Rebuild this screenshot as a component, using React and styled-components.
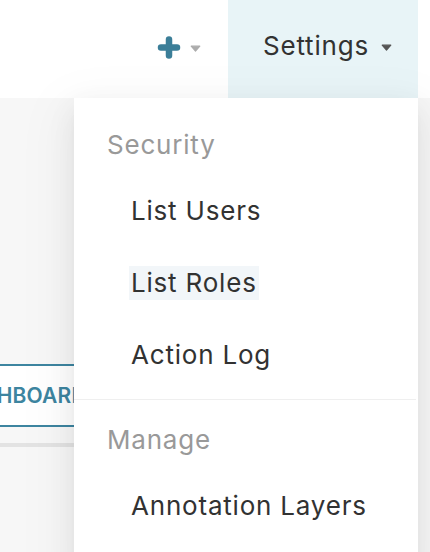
import React from "react";
import styled, { createGlobalStyle } from "styled-components";

const Global = createGlobalStyle`
  html, body { margin: 0; padding: 0; background: #f7f7f7; }
  body { font-family: Inter, "Noto Sans", "Liberation Sans", sans-serif; }
  * { box-sizing: border-box; }
`;

const Page = styled.div`
  position: relative;
  width: 430px;
  height: 552px;
  overflow: hidden;
  background: #f7f7f7;
  display: flex;
  flex-direction: column;
`;

const Header = styled.header`
  height: 98px;
  flex: none;
  background: #ffffff;
  display: flex;
  justify-content: flex-end;
  align-items: stretch;
  padding-right: 12px;
`;

const NewMenu = styled.div`
  display: flex;
  align-items: center;
  gap: 9px;
  padding: 0 27px 4px 0;
`;

const SettingsTab = styled.div`
  width: 190px;
  background: #e8f4f7;
  display: flex;
  align-items: center;
  gap: 12px;
  padding: 0 0 6px 35px;
  color: #323232;
  font-size: 26px;
  letter-spacing: 0.8px;
  line-height: 1;
  white-space: nowrap;
`;

const Body = styled.main`
  flex: 1;
  display: flex;
  overflow: hidden;
`;

const LeftPanel = styled.section`
  width: 74px;
  flex: none;
  overflow: hidden;
  display: flex;
  flex-direction: column;
  padding-top: 266px;
`;

const OutlineButton = styled.div`
  flex: none;
  height: 63px;
  width: 220px;
  margin-left: -47px;
  background: #ffffff;
  border-top: 2px solid #3d85a0;
  border-bottom: 2px solid #3d85a0;
  display: flex;
  align-items: center;
  color: #3d85a0;
  font-size: 21px;
  font-weight: 600;
  letter-spacing: 0.2px;
  text-transform: uppercase;
  white-space: nowrap;
`;

const TabRule = styled.div`
  height: 4px;
  margin-top: 16px;
  background: #e3e3e3;
`;

const Dropdown = styled.nav`
  position: absolute;
  top: 98px;
  left: 74px;
  width: 344px;
  bottom: -20px;
  background: #ffffff;
  z-index: 2;
  padding-top: 7px;
  box-shadow: 0 6px 12px -8px rgba(0, 0, 0, 0.12),
    0 10px 28px 0 rgba(0, 0, 0, 0.07), 0 16px 50px 14px rgba(0, 0, 0, 0.04);
`;

const GroupTitle = styled.div`
  padding: 22px 33px 12px;
  font-size: 26px;
  line-height: 36px;
  letter-spacing: 0.8px;
  color: #999999;
  white-space: nowrap;
`;

const Item = styled.div`
  padding: 18px 0 18px 57px;
  font-size: 26px;
  line-height: 36px;
  letter-spacing: 0.8px;
  color: #323232;
  white-space: nowrap;
`;

const ItemLabel = styled.span`
  display: inline-block;
  line-height: 34px;
  padding: 0 2px;
  margin: 0 -2px;
  background: ${(p) => (p.$active ? "#f2f6f9" : "transparent")};
`;

const Divider = styled.div`
  height: 1px;
  margin-top: 8px;
  margin-right: 2px;
  background: #efefef;
`;

const PlusIcon = () => (
  <svg width="24" height="23" viewBox="0 0 24 23" aria-hidden="true">
    <path
      d="M12 3.5v16M4 11.5h16"
      stroke="#3b7e98"
      strokeWidth="6.5"
      strokeLinecap="round"
      fill="none"
    />
  </svg>
);

const CaretIcon = ({ color }) => (
  <svg width="11" height="7" viewBox="0 0 11 7" aria-hidden="true" style={{ marginTop: 3 }}>
    <path d="M1.2 1.2h8.6L5.5 6z" fill={color} stroke={color} strokeWidth="1.2" strokeLinejoin="round" />
  </svg>
);

const groups = [
  { title: "Security", items: ["List Users", "List Roles", "Action Log"] },
  { title: "Manage", items: ["Annotation Layers"] },
];

export default function App() {
  return (
    <>
      <Global />
      <Page>
        <Header>
          <NewMenu>
            <PlusIcon />
            <CaretIcon color="#acacac" />
          </NewMenu>
          <SettingsTab>
            <span>Settings</span>
            <CaretIcon color="#555555" />
          </SettingsTab>
        </Header>
        <Body>
          <LeftPanel>
            <OutlineButton>Dashboard</OutlineButton>
            <TabRule />
          </LeftPanel>
        </Body>
        <Dropdown>
          {groups.map((g, gi) => (
            <React.Fragment key={g.title}>
              {gi > 0 && <Divider />}
              <GroupTitle>{g.title}</GroupTitle>
              {g.items.map((it) => (
                <Item key={it}>
                  <ItemLabel $active={it === "List Roles"}>{it}</ItemLabel>
                </Item>
              ))}
            </React.Fragment>
          ))}
        </Dropdown>
      </Page>
    </>
  );
}
